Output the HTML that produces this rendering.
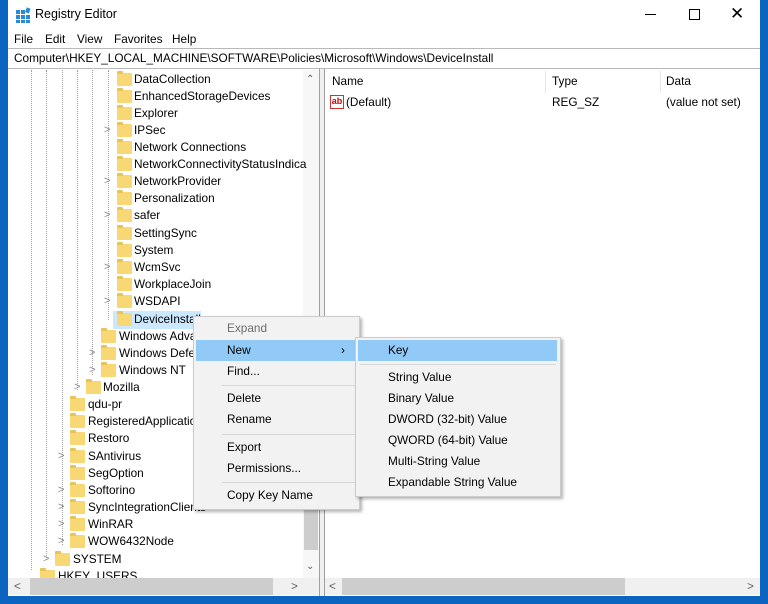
<!DOCTYPE html>
<html><head><meta charset="utf-8">
<style>
*{margin:0;padding:0;box-sizing:border-box}
body{width:768px;height:604px;overflow:hidden;background:#0a64c0;font-family:"Liberation Sans",sans-serif;font-size:11.8px;color:#000;position:relative}
.a{position:absolute}
.win{position:absolute;left:8px;top:0;width:752px;height:596px;background:#fff}
.t{position:absolute;white-space:nowrap;line-height:17px}
.f{position:absolute;width:15px;height:13px;background:#f8d775;border-radius:1px}
.f:before{content:"";position:absolute;left:0;top:-2px;width:6px;height:3px;background:#e8c35a;border-radius:1px 1px 0 0}
.chev{position:absolute;color:#888;font-size:11px;line-height:17px}
.dv{position:absolute;width:0;border-left:1px dotted #a0a0a0}
.menu{position:absolute;background:#f2f2f2;border:1px solid #ccc;box-shadow:2px 2px 3px rgba(0,0,0,.3)}
.mi{position:absolute;white-space:nowrap;line-height:21px}
.sep{position:absolute;height:1px;background:#d7d7d7}
.hl{position:absolute;background:#91c9f7}
.tree{position:absolute;left:0;top:1px;width:768px;height:577px;overflow:hidden}
</style></head><body>
<div class="win"></div>
<svg class="a" style="left:15px;top:7px" width="16" height="16" viewBox="0 0 16 16"><g fill="#2a8ad4"><rect x="1" y="3" width="4" height="4"/><rect x="6" y="3" width="4" height="4"/><rect x="1" y="8" width="4" height="4"/><rect x="6" y="8" width="4" height="4"/><rect x="11" y="8" width="4" height="4"/><rect x="1" y="13" width="4" height="3"/><rect x="6" y="13" width="4" height="3"/><rect x="11" y="13" width="4" height="3"/><rect x="11" y="1" width="4" height="5" transform="rotate(20 13 3)"/></g></svg>
<div class="t" style="left:35px;top:6px;font-size:12.5px">Registry Editor</div>
<div class="a" style="left:645px;top:14px;width:11px;height:1px;background:#000"></div>
<div class="a" style="left:689px;top:9px;width:11px;height:11px;border:1px solid #000"></div>
<div class="t" style="left:730px;top:4px;font-size:17px;line-height:20px">✕</div>
<div class="t" style="left:14px;top:31px">File</div>
<div class="t" style="left:45px;top:31px">Edit</div>
<div class="t" style="left:77px;top:31px">View</div>
<div class="t" style="left:114px;top:31px">Favorites</div>
<div class="t" style="left:172px;top:31px">Help</div>
<div class="a" style="left:8px;top:48px;width:752px;height:21px;border-top:1px solid #b9b9b9;border-bottom:1px solid #b9b9b9"></div>
<div class="t" style="left:14px;top:50px">Computer\HKEY_LOCAL_MACHINE\SOFTWARE\Policies\Microsoft\Windows\DeviceInstall</div>
<div class="a" style="left:319px;top:69px;width:6px;height:527px;background:#f0f0f0;border-left:1px solid #a0a0a0;border-right:1px solid #a0a0a0"></div>
<div class="a" style="left:303px;top:70px;width:16px;height:508px;background:#f7f7f7"></div>
<div class="a" style="left:304px;top:430px;width:14px;height:120px;background:#cdcdcd"></div>
<div class="t" style="left:306px;top:71px;color:#606060;font-size:10px">⌃</div>
<div class="t" style="left:306px;top:558px;color:#606060;font-size:10px">⌄</div>
<div class="a" style="left:8px;top:578px;width:311px;height:17px;background:#f0f0f0"></div>
<div class="a" style="left:30px;top:578px;width:243px;height:17px;background:#cdcdcd"></div>
<div class="t" style="left:14px;top:578px;color:#606060">&lt;</div>
<div class="t" style="left:291px;top:578px;color:#606060">&gt;</div>
<div class="a" style="left:325px;top:578px;width:435px;height:17px;background:#f0f0f0"></div>
<div class="a" style="left:342px;top:578px;width:283px;height:17px;background:#cdcdcd"></div>
<div class="t" style="left:329px;top:578px;color:#606060">&lt;</div>
<div class="t" style="left:747px;top:578px;color:#606060">&gt;</div>
<div class="a" style="left:545px;top:71px;width:1px;height:22px;background:#e5e5e5"></div>
<div class="a" style="left:660px;top:71px;width:1px;height:22px;background:#e5e5e5"></div>
<div class="t" style="left:332px;top:73px">Name</div>
<div class="t" style="left:552px;top:73px">Type</div>
<div class="t" style="left:666px;top:73px">Data</div>
<div class="a" style="left:330px;top:95px;width:14px;height:14px;border:1px solid #c33;background:#fff;font-size:9px;color:#c00;line-height:11px;text-align:center;font-weight:bold">ab</div>
<div class="t" style="left:346px;top:94px">(Default)</div>
<div class="t" style="left:552px;top:94px">REG_SZ</div>
<div class="t" style="left:666px;top:94px">(value not set)</div>
<div class="tree">
<div class="dv" style="left:31px;top:69px;height:500px"></div>
<div class="dv" style="left:46px;top:69px;height:490px"></div>
<div class="dv" style="left:62px;top:69px;height:475px"></div>
<div class="dv" style="left:77px;top:69px;height:320px"></div>
<div class="dv" style="left:92px;top:69px;height:305px"></div>
<div class="dv" style="left:108px;top:69px;height:250px"></div>
<div class="f" style="left:117px;top:72px"></div><div class="t" style="left:134px;top:70px">DataCollection</div>
<div class="f" style="left:117px;top:89px"></div><div class="t" style="left:134px;top:87px">EnhancedStorageDevices</div>
<div class="f" style="left:117px;top:106px"></div><div class="t" style="left:134px;top:104px">Explorer</div>
<div class="chev" style="left:104px;top:121px">&gt;</div><div class="f" style="left:117px;top:123px"></div><div class="t" style="left:134px;top:121px">IPSec</div>
<div class="f" style="left:117px;top:140px"></div><div class="t" style="left:134px;top:138px">Network Connections</div>
<div class="f" style="left:117px;top:157px"></div><div class="t" style="left:134px;top:155px">NetworkConnectivityStatusIndica</div>
<div class="chev" style="left:104px;top:172px">&gt;</div><div class="f" style="left:117px;top:174px"></div><div class="t" style="left:134px;top:172px">NetworkProvider</div>
<div class="f" style="left:117px;top:191px"></div><div class="t" style="left:134px;top:189px">Personalization</div>
<div class="chev" style="left:104px;top:206px">&gt;</div><div class="f" style="left:117px;top:208px"></div><div class="t" style="left:134px;top:206px">safer</div>
<div class="f" style="left:117px;top:226px"></div><div class="t" style="left:134px;top:224px">SettingSync</div>
<div class="f" style="left:117px;top:243px"></div><div class="t" style="left:134px;top:241px">System</div>
<div class="chev" style="left:104px;top:258px">&gt;</div><div class="f" style="left:117px;top:260px"></div><div class="t" style="left:134px;top:258px">WcmSvc</div>
<div class="f" style="left:117px;top:277px"></div><div class="t" style="left:134px;top:275px">WorkplaceJoin</div>
<div class="chev" style="left:104px;top:292px">&gt;</div><div class="f" style="left:117px;top:294px"></div><div class="t" style="left:134px;top:292px">WSDAPI</div>
<div class="a" style="left:113px;top:310px;width:88px;height:18px;background:#cce8ff"></div>
<div class="f" style="left:117px;top:312px"></div><div class="t" style="left:134px;top:310px">DeviceInstall</div>
<div class="f" style="left:101px;top:329px"></div><div class="t" style="left:119px;top:327px">Windows Adva</div>
<div class="chev" style="left:89px;top:344px">&gt;</div><div class="f" style="left:101px;top:346px"></div><div class="t" style="left:119px;top:344px">Windows Defe</div>
<div class="chev" style="left:89px;top:361px">&gt;</div><div class="f" style="left:101px;top:363px"></div><div class="t" style="left:119px;top:361px">Windows NT</div>
<div class="chev" style="left:74px;top:378px">&gt;</div><div class="f" style="left:86px;top:380px"></div><div class="t" style="left:103px;top:378px">Mozilla</div>
<div class="f" style="left:70px;top:397px"></div><div class="t" style="left:88px;top:395px">qdu-pr</div>
<div class="f" style="left:70px;top:414px"></div><div class="t" style="left:88px;top:412px">RegisteredApplicatio</div>
<div class="f" style="left:70px;top:431px"></div><div class="t" style="left:88px;top:429px">Restoro</div>
<div class="chev" style="left:58px;top:447px">&gt;</div><div class="f" style="left:70px;top:449px"></div><div class="t" style="left:88px;top:447px">SAntivirus</div>
<div class="f" style="left:70px;top:466px"></div><div class="t" style="left:88px;top:464px">SegOption</div>
<div class="chev" style="left:58px;top:481px">&gt;</div><div class="f" style="left:70px;top:483px"></div><div class="t" style="left:88px;top:481px">Softorino</div>
<div class="chev" style="left:58px;top:498px">&gt;</div><div class="f" style="left:70px;top:500px"></div><div class="t" style="left:88px;top:498px">SyncIntegrationClients</div>
<div class="chev" style="left:58px;top:515px">&gt;</div><div class="f" style="left:70px;top:517px"></div><div class="t" style="left:88px;top:515px">WinRAR</div>
<div class="chev" style="left:58px;top:532px">&gt;</div><div class="f" style="left:70px;top:534px"></div><div class="t" style="left:88px;top:532px">WOW6432Node</div>
<div class="chev" style="left:43px;top:550px">&gt;</div><div class="f" style="left:55px;top:552px"></div><div class="t" style="left:73px;top:550px">SYSTEM</div>
<div class="f" style="left:40px;top:569px"></div><div class="t" style="left:58px;top:567px">HKEY_USERS</div>
</div>
<div class="menu" style="left:193px;top:316px;width:167px;height:194px"></div>
<div class="hl" style="left:196px;top:340px;width:161px;height:21px"></div>
<div class="mi" style="left:227px;top:318px;color:#6d6d6d">Expand</div>
<div class="mi" style="left:227px;top:340px">New</div>
<div class="mi" style="left:341px;top:340px">›</div>
<div class="mi" style="left:227px;top:361px">Find...</div>
<div class="sep" style="left:222px;top:385px;width:134px"></div>
<div class="mi" style="left:227px;top:388px">Delete</div>
<div class="mi" style="left:227px;top:409px">Rename</div>
<div class="sep" style="left:222px;top:434px;width:134px"></div>
<div class="mi" style="left:227px;top:437px">Export</div>
<div class="mi" style="left:227px;top:458px">Permissions...</div>
<div class="sep" style="left:222px;top:482px;width:134px"></div>
<div class="mi" style="left:227px;top:485px">Copy Key Name</div>
<div class="menu" style="left:355px;top:337px;width:206px;height:160px"></div>
<div class="hl" style="left:358px;top:340px;width:199px;height:21px"></div>
<div class="mi" style="left:388px;top:340px">Key</div>
<div class="sep" style="left:360px;top:364px;width:196px"></div>
<div class="mi" style="left:388px;top:367px">String Value</div>
<div class="mi" style="left:388px;top:388px">Binary Value</div>
<div class="mi" style="left:388px;top:409px">DWORD (32-bit) Value</div>
<div class="mi" style="left:388px;top:430px">QWORD (64-bit) Value</div>
<div class="mi" style="left:388px;top:451px">Multi-String Value</div>
<div class="mi" style="left:388px;top:472px">Expandable String Value</div>
</body></html>
